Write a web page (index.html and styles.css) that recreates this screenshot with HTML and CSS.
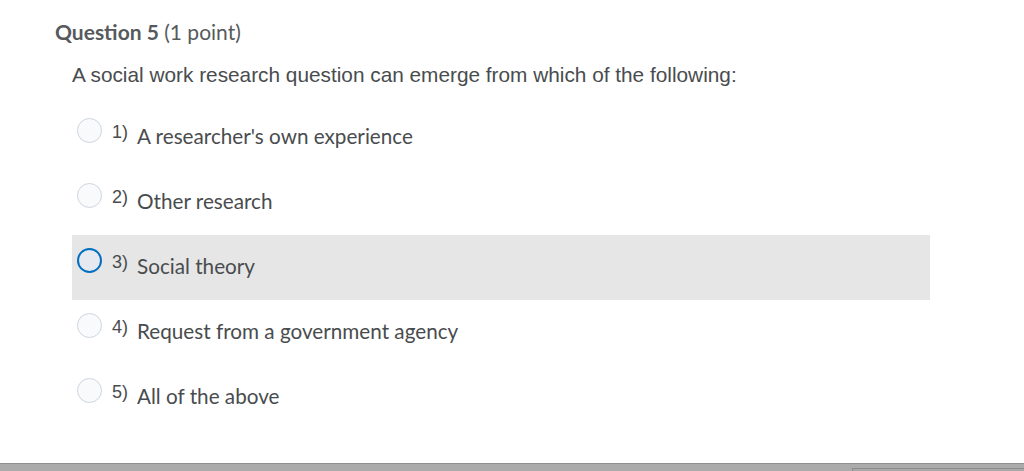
FILE: index.html
```html
<!DOCTYPE html>
<html>
<head>
<meta charset="utf-8">
<link rel="stylesheet" href="styles.css">
</head>
<body>
<div class="page">
  <div class="content">
    <h2 class="q-title"><span class="q-strong">Question 5</span> (1 point)</h2>
    <p class="q-text">A social work research question can emerge from which of the following:</p>
    <div class="options">
      <div class="opt"><span class="radio"></span><span class="num">1)</span><span class="label">A researcher's own experience</span></div>
      <div class="opt"><span class="radio"></span><span class="num">2)</span><span class="label">Other research</span></div>
      <div class="opt opt-hover"><span class="radio radio-focus"></span><span class="num">3)</span><span class="label">Social theory</span></div>
      <div class="opt"><span class="radio"></span><span class="num">4)</span><span class="label">Request from a government agency</span></div>
      <div class="opt"><span class="radio"></span><span class="num">5)</span><span class="label">All of the above</span></div>
    </div>
  </div>
  <div class="bottom-bar"><div class="bar-seg"></div></div>
</div>
</body>
</html>
```

FILE: styles.css
```css
html, body {
  margin: 0;
  padding: 0;
  background: #ffffff;
}
.page {
  width: 1024px;
  height: 471px;
  display: flex;
  flex-direction: column;
  overflow: hidden;
}
.content {
  flex: 1;
}
.q-title {
  margin: 20px 0 0 55px;
  font-family: Lato, "Liberation Sans", sans-serif;
  font-size: 21px;
  line-height: 24px;
  font-weight: 400;
  color: #565a5c;
}
.q-strong {
  font-weight: 700;
}
.q-text {
  margin: 19px 0 0 72px;
  font-family: "Liberation Sans", Arial, sans-serif;
  font-size: 20.8px;
  line-height: 24px;
  color: #494c4e;
}
.options {
  margin: 18px 0 0 72px;
  width: 858px;
}
.opt {
  height: 65px;
  display: flex;
  align-items: flex-start;
  padding-left: 5px;
  box-sizing: border-box;
}
.opt-hover {
  background: #e6e6e6;
}
.radio {
  width: 25px;
  height: 25px;
  box-sizing: border-box;
  border-radius: 50%;
  border: 1px solid #cfd5de;
  background: #f9fafb;
  margin-top: 13px;
  flex: none;
}
.radio-focus {
  border: 2px solid #006fbf;
  background: #e6eaf0;
}
.num {
  width: 25px;
  margin-left: 10px;
  margin-top: 17px;
  font-family: "Liberation Sans", Arial, sans-serif;
  font-size: 18px;
  line-height: 20px;
  color: #494c4e;
  flex: none;
}
.label {
  margin-top: 19px;
  font-family: Lato, "Liberation Sans", sans-serif;
  font-size: 20.7px;
  line-height: 24px;
  color: #494c4e;
}
.bottom-bar {
  height: 7px;
  flex: none;
  background: #ababab;
  border-top: 1px solid #8f8f8f;
  display: flex;
  justify-content: flex-end;
}
.bar-seg {
  width: 171px;
  margin-top: 4px;
  border-top: 1px solid #8c8c8c;
  border-left: 1px solid #8c8c8c;
  background: #a8a8a8;
}
```
